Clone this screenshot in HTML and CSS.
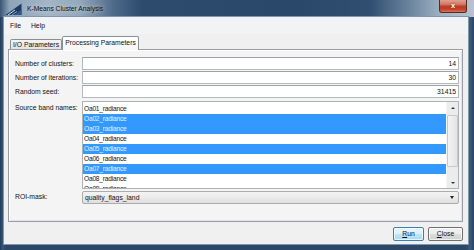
FILE: index.html
```html
<!DOCTYPE html>
<html>
<head>
<meta charset="utf-8">
<title>K-Means Cluster Analysis</title>
<link rel="stylesheet" href="styles.css">
</head>
<body>
<div class="window">
  <div class="titlebar">
    <svg class="app-icon" width="17" height="12" viewBox="0 0 17 12">
      <polygon points="0.5,12 16.5,0.5 16.5,12" fill="#1d3b63"/>
      <polygon points="9,12 16.5,6.5 16.5,12" fill="#2e5a8e"/>
      <line x1="3" y1="12" x2="10" y2="7" stroke="#d8e6f4" stroke-width="1"/>
      <line x1="7" y1="12" x2="12" y2="8.4" stroke="#9fc0e0" stroke-width="0.8"/>
    </svg>
    <span class="title">K-Means Cluster Analysis</span>
    <div class="close-btn"><span>x</span></div>
  </div>
  <div class="frame">
    <div class="client">
      <div class="menubar">
        <span class="menu-item">File</span>
        <span class="menu-item">Help</span>
      </div>
      <div class="tabs">
        <div class="tab">I/O Parameters</div>
        <div class="tab active">Processing Parameters</div>
      </div>
      <div class="pane">
        <div class="form">
          <div class="label">Number of clusters:</div>
          <div class="field">14</div>
          <div class="label">Number of iterations:</div>
          <div class="field">30</div>
          <div class="label">Random seed:</div>
          <div class="field">31415</div>
          <div class="label label-top">Source band names:</div>
          <div class="listbox">
            <div class="items">
              <div class="item">Oa01_radiance</div>
              <div class="item sel">Oa02_radiance</div>
              <div class="item sel">Oa03_radiance</div>
              <div class="item">Oa04_radiance</div>
              <div class="item sel">Oa05_radiance</div>
              <div class="item">Oa06_radiance</div>
              <div class="item sel">Oa07_radiance</div>
              <div class="item">Oa08_radiance</div>
              <div class="item">Oa09_radiance</div>
            </div>
            <div class="scrollbar">
              <div class="sb-btn"><span class="arrow-up"></span></div>
              <div class="sb-track"><div class="sb-thumb"></div></div>
              <div class="sb-btn"><span class="arrow-down"></span></div>
            </div>
          </div>
          <div class="label">ROI-mask:</div>
          <div class="combo"><span class="combo-text">quality_flags_land</span><span class="combo-arrow"></span></div>
        </div>
      </div>
      <div class="footer">
        <div class="btn default"><span class="u">R</span>un</div>
        <div class="btn"><span class="u">C</span>lose</div>
      </div>
    </div>
  </div>
</div>
</body>
</html>
```

FILE: styles.css
```css
html, body {
  margin: 0;
  padding: 0;
}
body {
  width: 474px;
  height: 250px;
  overflow: hidden;
  background: #2b4869;
  font-family: "Liberation Sans", Arial, sans-serif;
  font-size: 6.8px;
  color: #111;
}
.window {
  display: flex;
  flex-direction: column;
  height: 250px;
}
.titlebar {
  height: 17px;
  flex: none;
  display: flex;
  align-items: flex-start;
  background: linear-gradient(90deg, #3a5573 0, #8ea4b9 2%, #a3b5c6 10%, #93a8bc 17%, #4d6a89 24%, #2c4b6d 30%, #29486a 62%, #2f4e70 78%, #6f88a1 87%, #9fb2c3 93%, #b6c4d0 100%);
}
.app-icon {
  margin: 3px 0 0 5px;
  flex: none;
}
.title {
  margin-left: 5px;
  line-height: 18px;
  font-size: 6.7px;
  color: #0d0d0d;
  text-shadow: 0 0 4px rgba(235,242,248,0.9);
}
.close-btn {
  margin-left: auto;
  margin-right: 7px;
  width: 28px;
  height: 13px;
  box-sizing: border-box;
  border: 1px solid #5a2a22;
  border-top: none;
  border-radius: 0 0 3px 3px;
  background: linear-gradient(180deg, #dca192 0%, #d27a66 35%, #bb3a25 55%, #c4462e 80%, #d8785c 100%);
  display: flex;
  align-items: center;
  justify-content: center;
}
.close-btn span {
  color: #fff;
  font-weight: bold;
  font-size: 7.5px;
  line-height: 10px;
  margin-top: -1px;
  text-shadow: 0 0 2px #6a1a10;
}
.frame {
  flex: 1;
  display: flex;
  padding: 0 6px 6px 4px;
  background: linear-gradient(90deg, #223c5a 0, #3b5878 3px, #2b4869 5px, #2b4869 466px, #3d5a7a 470px, #27436a 474px);
}
.client {
  flex: 1;
  display: flex;
  flex-direction: column;
  background: #f0f0f0;
  box-shadow: 0 0 0 1px #7f96ad;
}
.menubar {
  height: 17px;
  flex: none;
  display: flex;
  gap: 10px;
  padding-left: 6px;
  line-height: 17px;
  background: #f2f3f4;
}
.tabs {
  height: 15px;
  flex: none;
  display: flex;
  align-items: flex-end;
  padding-left: 6px;
  position: relative;
  z-index: 1;
}
.tab {
  box-sizing: border-box;
  height: 10px;
  width: 52px;
  line-height: 9px;
  text-align: center;
  border: 1px solid #8c8e94;
  border-bottom: none;
  border-radius: 2px 2px 0 0;
  background: linear-gradient(180deg, #f4f4f4, #e2e2e2);
  margin-bottom: 0;
}
.tab.active {
  height: 14px;
  width: 77px;
  line-height: 12px;
  background: linear-gradient(180deg, #ffffff, #f5f5f5);
  margin-bottom: -1px;
  margin-left: 0;
}
.pane {
  flex: none;
  height: 173px;
  box-sizing: border-box;
  margin: 0 5px 0 4px;
  border: 1px solid #9a9da3;
  background: #f4f4f4;
  box-shadow: inset 1px 1px 0 #fff, inset -1px -1px 0 #e4e4e4;
  padding: 7px 3px 0 6px;
}
.form {
  display: grid;
  grid-template-columns: 67px 1fr;
  row-gap: 1px;
}
.label {
  line-height: 13px;
  white-space: nowrap;
}
.label-top {
  margin-top: 2px;
  line-height: 14px;
}
.field {
  height: 13px;
  box-sizing: border-box;
  border: 1px solid #b4b7bd;
  border-top-color: #9ea2a8;
  background: #fff;
  text-align: right;
  padding-right: 2px;
  line-height: 11px;
}
.listbox {
  margin-top: 2px;
  height: 88px;
  box-sizing: border-box;
  border: 1px solid #aeb1b6;
  background: #fff;
  display: flex;
  overflow: hidden;
}
.items {
  flex: 1;
  padding-top: 2px;
  overflow: hidden;
}
.item {
  height: 10px;
  line-height: 10px;
  padding-left: 1px;
  font-size: 6.6px;
  letter-spacing: -0.2px;
  white-space: nowrap;
}
.item.sel {
  background: #3399ff;
  color: #e6f2ff;
}
.scrollbar {
  width: 11px;
  flex: none;
  display: flex;
  flex-direction: column;
  background: #ececec;
  border-left: 1px solid #f6f6f6;
}
.sb-btn {
  height: 11px;
  flex: none;
  display: flex;
  align-items: center;
  justify-content: center;
}
.arrow-up {
  width: 0;
  height: 0;
  border-left: 2.5px solid transparent;
  border-right: 2.5px solid transparent;
  border-bottom: 2.5px solid #333;
}
.arrow-down {
  width: 0;
  height: 0;
  border-left: 2.5px solid transparent;
  border-right: 2.5px solid transparent;
  border-top: 2.5px solid #333;
}
.sb-track {
  flex: 1;
  padding: 2px 0 10px;
  display: flex;
}
.sb-thumb {
  flex: 1;
  box-sizing: border-box;
  border: 1px solid #c9c9c9;
  border-radius: 1px;
  background: linear-gradient(90deg, #f4f4f4, #e4e4e4);
}
.combo {
  margin-top: 1px;
  height: 13px;
  box-sizing: border-box;
  border: 1px solid #acacac;
  border-radius: 2px;
  background: linear-gradient(180deg, #f3f3f3 0%, #ebebeb 50%, #dedede 100%);
  display: flex;
  align-items: center;
  padding: 0 4px 0 2px;
}
.combo-text {
  flex: 1;
  line-height: 11px;
}
.combo-arrow {
  width: 0;
  height: 0;
  border-left: 2.5px solid transparent;
  border-right: 2.5px solid transparent;
  border-top: 3px solid #222;
}
.footer {
  flex: 1;
  display: flex;
  justify-content: flex-end;
  align-items: flex-start;
  gap: 4px;
  padding: 5px 5px 0 0;
}
.btn {
  height: 14px;
  width: 35px;
  box-sizing: border-box;
  border: 1px solid #707070;
  border-radius: 2px;
  background: linear-gradient(180deg, #f2f2f2 0%, #ebebeb 50%, #dddddd 51%, #cfcfcf 100%);
  box-shadow: inset 0 0 0 1px rgba(255,255,255,0.7);
  text-align: center;
  line-height: 12px;
}
.btn.default {
  width: 31px;
  border-color: #3c7fb1;
  background: linear-gradient(180deg, #eaf6fd 0%, #d9f0fc 50%, #bee6fd 51%, #a7d9f5 100%);
}
.u {
  text-decoration: underline;
}
```
